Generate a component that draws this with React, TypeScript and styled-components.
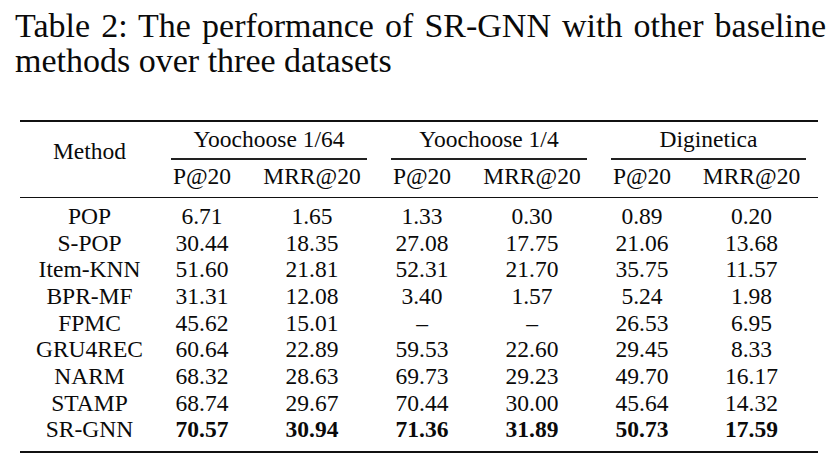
import React from "react";
import styled, { createGlobalStyle } from "styled-components";

type Row = {
  method: string;
  values: string[];
  best?: boolean;
};

const groups = ["Yoochoose 1/64", "Yoochoose 1/4", "Diginetica"];
const metrics = ["P@20", "MRR@20"];

const rows: Row[] = [
  { method: "POP", values: ["6.71", "1.65", "1.33", "0.30", "0.89", "0.20"] },
  { method: "S-POP", values: ["30.44", "18.35", "27.08", "17.75", "21.06", "13.68"] },
  { method: "Item-KNN", values: ["51.60", "21.81", "52.31", "21.70", "35.75", "11.57"] },
  { method: "BPR-MF", values: ["31.31", "12.08", "3.40", "1.57", "5.24", "1.98"] },
  { method: "FPMC", values: ["45.62", "15.01", "–", "–", "26.53", "6.95"] },
  { method: "GRU4REC", values: ["60.64", "22.89", "59.53", "22.60", "29.45", "8.33"] },
  { method: "NARM", values: ["68.32", "28.63", "69.73", "29.23", "49.70", "16.17"] },
  { method: "STAMP", values: ["68.74", "29.67", "70.44", "30.00", "45.64", "14.32"] },
  {
    method: "SR-GNN",
    values: ["70.57", "30.94", "71.36", "31.89", "50.73", "17.59"],
    best: true,
  },
];

export default function App() {
  return (
    <>
      <GlobalStyle />
      <Page>
        <Caption>
          Table 2: The performance of SR-GNN with other baseline methods over
          three datasets
        </Caption>
        <Table>
          <Rule $weight={2} />
          <MethodHead>Method</MethodHead>
          {groups.map((g) => (
            <GroupHead key={g}>{g}</GroupHead>
          ))}
          {groups.map((g) => (
            <CMidRule key={g + "-rule"} />
          ))}
          {groups.map((g) =>
            metrics.map((m) => <MetricHead key={g + m}>{m}</MetricHead>)
          )}
          <Rule $weight={1.5} $after={4.7} />
          {rows.map((row) => (
            <React.Fragment key={row.method}>
              <MethodCell>{row.method}</MethodCell>
              {row.values.map((v, i) => (
                <Cell key={i} $bold={row.best}>
                  {v}
                </Cell>
              ))}
            </React.Fragment>
          ))}
          <Rule $weight={2} $before={8} />
        </Table>
      </Page>
    </>
  );
}

const GlobalStyle = createGlobalStyle`
  html, body {
    margin: 0;
    padding: 0;
    background: #ffffff;
  }
`;

const Page = styled.div`
  width: 834px;
  height: 463px;
  padding-top: 8px;
  box-sizing: border-box;
  overflow: hidden;
  font-family: "Liberation Serif", "Times New Roman", Tinos, "DejaVu Serif", serif;
  color: #0a0a0a;
`;

const Caption = styled.p`
  margin: 0 0 0 15px;
  width: 811px;
  font-size: 34px;
  line-height: 35px;
  text-align: justify;
`;

const Table = styled.div`
  display: grid;
  grid-template-columns: 139px 86px 134px 86px 134px 86px 133px;
  margin: 42px 0 0 20px;
  font-size: 23.5px;
  line-height: 26.65px;
`;

const Rule = styled.div<{ $weight: number; $before?: number; $after?: number }>`
  grid-column: 1 / -1;
  height: ${(p) => p.$weight}px;
  background: #111111;
  margin-top: ${(p) => p.$before ?? 0}px;
  margin-bottom: ${(p) => p.$after ?? 0}px;
`;

const MethodHead = styled.div`
  grid-row: span 3;
  align-self: start;
  padding-top: 15.7px;
  text-align: center;
`;

const GroupHead = styled.div`
  grid-column: span 2;
  padding: 3.7px 0 6px;
  text-align: center;
`;

const CMidRule = styled.div`
  grid-column: span 2;
  height: 1.2px;
  margin: 0 12px;
  background: #222222;
`;

const MetricHead = styled.div`
  padding: 3px 0 7.7px;
  text-align: center;
`;

const MethodCell = styled.div`
  text-align: center;
`;

const Cell = styled.div<{ $bold?: boolean }>`
  text-align: center;
  font-weight: ${(p) => (p.$bold ? 700 : 400)};
`;
